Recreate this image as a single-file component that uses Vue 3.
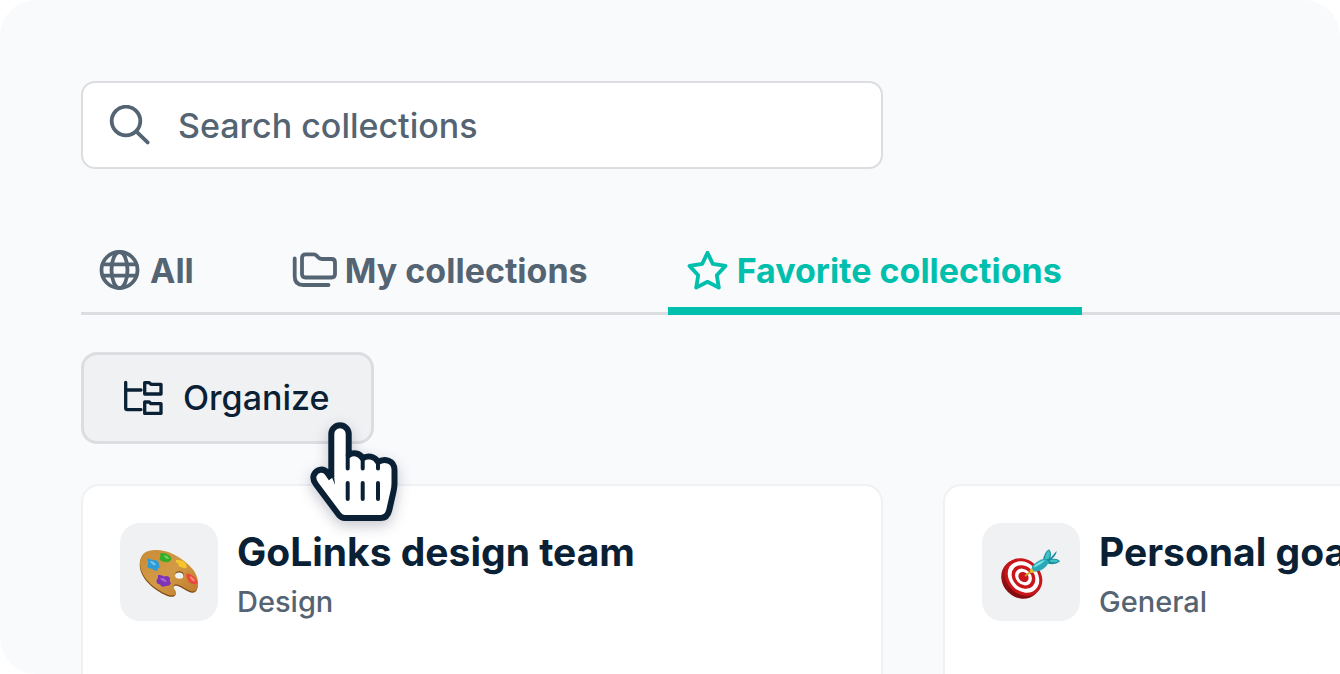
<template>
  <main class="page">
    <label class="search">
      <svg class="search-icon" viewBox="0 0 42 40" aria-hidden="true">
        <circle cx="17" cy="16" r="14.3" />
        <path d="M27.2 26.3 L38.6 37.4" />
      </svg>
      <input v-model="query" type="text" placeholder="Search collections" aria-label="Search collections" />
    </label>

    <nav class="tabs">
      <button
        v-for="tab in tabs"
        :key="tab.id"
        type="button"
        class="tab"
        :class="{ active: tab.id === activeTab }"
        @click="activeTab = tab.id"
      >
        <svg v-if="tab.id === 'all'" class="tab-icon" viewBox="0 0 40 40" aria-hidden="true">
          <circle cx="19.5" cy="19" r="18" />
          <ellipse cx="19.5" cy="19" rx="8" ry="18" />
          <path d="M2.5 13.4 H36.5 M2.5 24.6 H36.5" />
        </svg>
        <svg v-else-if="tab.id === 'mine'" class="tab-icon wide" viewBox="0 0 42 40" aria-hidden="true">
          <path d="M12 3.4 H20.5 C22 3.4 23 3.9 24 5 L25 6.2 C26 7.5 27.2 8 29 8 H38.5 Q42 8 42 11.5 V23 Q42 26.5 38.5 26.5 H12.5 Q9 26.5 9 23 V6.9 Q9 3.4 12.5 3.4 Z" />
          <path d="M1.7 7.5 V25.5 Q1.7 34 10.2 34 H35.5" />
        </svg>
        <svg v-else class="tab-icon" viewBox="0 0 40 40" aria-hidden="true">
          <path d="M20.5 1.8 L25.8 12.9 L38.5 14.9 L29.8 24.3 L31.8 36.6 L20.5 30.8 L9.2 36.6 L11.2 24.3 L2.5 14.9 L15.2 12.9 Z" />
        </svg>
        <span>{{ tab.label }}</span>
      </button>
    </nav>

    <div class="toolbar">
      <button type="button" class="organize">
        <svg class="organize-icon" viewBox="0 0 40 36" aria-hidden="true">
          <path d="M2.7 2.3 V28 Q2.7 29.6 4.3 29.6 H18 M2.7 10 H18" />
          <path d="M21.7 2.6 H26.2 L28 4.3 H38 V14 H21.7 Z" />
          <path d="M21.7 22 H26.2 L28 23.7 H38 V33.4 H21.7 Z" />
        </svg>
        <span>Organize</span>
      </button>

      <!-- hand cursor -->
      <svg class="cursor" viewBox="0 0 88 101" aria-hidden="true">
        <path
          class="hand"
          d="M21.3 56 V13 A8.7 8.7 0 0 1 38.7 13 V34 C43 30.8 50 32 52.7 37.3 C57 34 65 35 68 41 C74 37 84.5 39 84.5 49 V62 Q84.5 66 83.6 70 L79.3 89 Q77.5 97 70.5 97 H35 Q31 97 28.5 93.5 L6 63.5 C3.4 60 2.8 56.8 3.8 54 C6.5 47.5 14 47 17.5 52 L21.3 57.5"
        />
        <path class="thumb" d="M19.5 50 L25 64 L23.5 50 Z" />
        <path class="joint" d="M37.7 34 V47.5 M52.7 37.3 V47.5 M68 41 V47.5" />
        <path class="joint" d="M37.7 62 V78 M52.7 62 V78 M68 62 V78" />
      </svg>
    </div>

    <section class="cards">
      <article v-for="card in cards" :key="card.title" class="card">
        <div class="card-icon">
          <svg v-if="card.icon === 'palette'" viewBox="0 0 60 50" aria-hidden="true">
            <defs>
              <linearGradient id="wood" x1="0" y1="0" x2="1" y2="1">
                <stop offset="0" stop-color="#c98b35" />
                <stop offset="0.5" stop-color="#d39a45" />
                <stop offset="1" stop-color="#bd7a2b" />
              </linearGradient>
            </defs>
            <path
              fill="#7d4a17"
              fill-rule="evenodd"
              transform="translate(-0.3 1.3)"
              :d="palettePath"
            />
            <path fill="url(#wood)" fill-rule="evenodd" :d="palettePath" />
            <path fill="#2f9bd6" d="M8 9.5 Q11 9 13 11 Q17 10 20 13.5 Q19 15 21 18 Q18 19.5 18 22 Q14 21 12.5 19.5 Q8 20 8.5 16.5 Q10 14 8 9.5 Z" />
            <path fill="#72c5ee" d="M11 12 Q15 12 17 16 Q13 17 11 12 Z" />
            <path fill="#35ad29" d="M21 4.5 Q26 3 29.5 6 Q33 8 32 11 Q30 13.8 26.5 13 Q22 12.5 20.5 10 Q22 7 21 4.5 Z" />
            <path fill="#74d45c" d="M25 6 Q30 7 30 10 Q26 10.5 25 6 Z" />
            <path fill="#f5c62d" d="M37 11 Q42 10.5 45 12.5 Q48 15 47.5 19 Q44 19.5 42 18 Q39 17.5 39.5 15 Q36 13 37 11 Z" />
            <path fill="#e9483b" d="M47.5 24.5 Q51 24 54 27 Q58 30 58.5 34.5 Q54 36.5 50.5 33.5 Q46.5 29 47.5 24.5 Z" />
            <path fill="#ff9384" d="M51 27 Q55 29 56 32.5 Q52 32 51 27 Z" />
            <path fill="#7d33b4" d="M19 26 Q23 25.5 25 27.5 Q29 26 31 29 Q30 32 32 34.5 Q30 37.5 26.5 37 Q23 39 21 35.5 Q17 35 17.5 31.5 Q19.5 29 19 26 Z" />
            <path fill="#a865d6" d="M21 29 Q26 28.5 28 33 Q23 33 21 29 Z" />
          </svg>
          <svg v-else viewBox="0 0 60 50" aria-hidden="true">
            <defs>
              <linearGradient id="rim" x1="0" y1="0" x2="0.6" y2="1">
                <stop offset="0" stop-color="#d8201f" />
                <stop offset="1" stop-color="#7e0b0e" />
              </linearGradient>
            </defs>
            <g transform="rotate(45 20 30)">
              <ellipse cx="20" cy="30" rx="21" ry="18.5" fill="url(#rim)" />
            </g>
            <g transform="rotate(45 22.5 28)">
              <ellipse cx="22.5" cy="28" rx="20.5" ry="17" fill="#c8161b" />
              <ellipse cx="22.5" cy="28" rx="17.3" ry="14" fill="#fff" />
              <ellipse cx="22.5" cy="28" rx="13" ry="10.6" fill="#c8161b" />
              <ellipse cx="22.5" cy="28" rx="9.2" ry="7.5" fill="#fff" />
              <ellipse cx="22.5" cy="28" rx="5.5" ry="4.7" fill="#c8161b" />
            </g>
            <path stroke="#d29b13" stroke-width="1.6" d="M24 27 L31 21.8" />
            <path fill="#e9bd1b" d="M28.5 21.5 L31 18.5 L34.5 22 L30.5 24.3 Z" />
            <path fill="#168f9b" d="M42 11.5 Q43 3 48 0.2 Q51 3 49.5 9 L55.5 2 Q56 5 51 10 Q57 9 59 12.5 Q54 16.5 46.5 14.5 Z" />
            <path fill="#43bfc8" d="M44 10 Q44 4 48 1 Q50 5 47.5 10 Z M49 11 Q55 9.5 58 12.3 Q53 14.3 49 12.5 Z" />
            <path fill="#27a9b7" d="M31 17.5 Q36 11 44.5 9.5 L48 13 Q44 21.5 34 22.8 Q30.5 21 31 17.5 Z" />
            <path fill="#79e0e5" d="M33 17 Q38 12 44.5 11 Q40 16 33.5 18.5 Z" />
          </svg>
        </div>
        <div class="card-text">
          <h2>{{ card.title }}</h2>
          <p>{{ card.category }}</p>
        </div>
      </article>
    </section>
  </main>
</template>

<script setup>
import { ref } from 'vue'

const query = ref('')
const activeTab = ref('favorite')

const tabs = [
  { id: 'all', label: 'All' },
  { id: 'mine', label: 'My collections' },
  { id: 'favorite', label: 'Favorite collections' }
]

const cards = [
  { title: 'GoLinks design team', category: 'Design', icon: 'palette' },
  { title: 'Personal goals', category: 'General', icon: 'target' }
]

// board outline plus the thumb hole
const palettePath =
  'M1 14 C1.5 4 8 1 16 1 C24 1 29 2.5 35 5.5 C43 9.5 49 14.5 54 20.5 C58 25.5 60 33 58.5 38.5 ' +
  'C57.5 42.5 54 43.5 50 41.5 C46.5 39.5 44 38.5 42 37 C39 35.3 35 34.5 34.5 37.5 C34.3 40 37.5 41.5 37 44 ' +
  'C36 47.5 31.5 47 27 45 C18 41 10 34.5 5.5 28 C2.5 23.5 1 19 1 14 Z ' +
  'M36 26 a4.4 3.8 0 1 0 8.8 0 a4.4 3.8 0 1 0 -8.8 0 Z'
</script>

<style>
body {
  margin: 0;
  background: #fff;
}
</style>

<style scoped>
.page {
  --column: calc(60vw - 2px);
  --ink: #0a2135;
  --muted: #546472;
  --teal: #00bfad;
  --line: #dcdde0;
  box-sizing: border-box;
  display: flex;
  flex-direction: column;
  min-height: 100vh;
  padding: 81px 0 0 81px;
  overflow: hidden;
  background: #f9fafc;
  border-radius: 36px;
  font-family: Inter, "Liberation Sans", sans-serif;
  font-weight: 500;
  color: var(--ink);
}

button,
input {
  font: inherit;
  color: inherit;
}

svg {
  display: block;
  flex: none;
}

/* search */
.search {
  box-sizing: border-box;
  display: flex;
  align-items: center;
  gap: 27px;
  width: var(--column);
  height: 88px;
  padding: 0 26px;
  background: #fff;
  border: 2px solid var(--line);
  border-radius: 14px;
}

.search-icon {
  width: 42px;
  height: 40px;
  fill: none;
  stroke: var(--muted);
  stroke-width: 3.8;
  stroke-linecap: round;
}

.search input {
  flex: 1;
  min-width: 0;
  padding: 2px 0 0;
  border: 0;
  outline: 0;
  background: none;
  font-size: 34px;
  line-height: 44px;
}

.search input::placeholder {
  color: var(--muted);
  opacity: 1;
}

/* tabs */
.tabs {
  display: flex;
  gap: 60px;
  margin-top: 60px;
  border-bottom: 3px solid var(--line);
}

.tab {
  display: flex;
  align-items: center;
  gap: 10px;
  margin-bottom: -3px;
  padding: 20px 20px 14px 19px;
  border: 0;
  border-bottom: 8px solid transparent;
  background: none;
  color: var(--muted);
  font-size: 34px;
  font-weight: 700;
  line-height: 44px;
  white-space: nowrap;
  cursor: pointer;
}

.tab.active {
  color: var(--teal);
  border-bottom-color: var(--teal);
}

.tab-icon {
  width: 40px;
  height: 40px;
  overflow: visible;
  fill: none;
  stroke: currentColor;
  stroke-width: 3.8;
  stroke-linecap: round;
  stroke-linejoin: round;
}

.tab-icon.wide {
  width: 42px;
}

/* organize */
.toolbar {
  position: relative;
  align-self: flex-start;
  margin-top: 37px;
}

.organize {
  display: flex;
  align-items: center;
  gap: 20px;
  height: 92px;
  padding: 0 42px 0 39px;
  background: #f0f1f3;
  border: 3px solid var(--line);
  border-radius: 16px;
  font-size: 34px;
  line-height: 44px;
  cursor: pointer;
}

.organize-icon {
  width: 40px;
  height: 36px;
  fill: none;
  stroke: currentColor;
  stroke-width: 3.3;
  stroke-linecap: round;
  stroke-linejoin: round;
}

.cursor {
  position: absolute;
  right: -24px;
  bottom: -78px;
  z-index: 2;
  width: 88px;
  height: 101px;
  overflow: visible;
  filter: drop-shadow(0 5px 7px rgba(20, 25, 60, 0.24));
  pointer-events: none;
}

.hand {
  fill: #fff;
  stroke: var(--ink);
  stroke-width: 6;
  stroke-linejoin: round;
}

.thumb {
  fill: var(--ink);
}

.joint {
  fill: none;
  stroke: var(--ink);
  stroke-width: 4;
  stroke-linecap: round;
}

/* cards */
.cards {
  display: flex;
  flex: 1;
  gap: 60px;
  margin-top: 40px;
}

.card {
  box-sizing: border-box;
  display: flex;
  flex: 0 0 var(--column);
  align-items: flex-start;
  gap: 19px;
  min-height: 190px;
  padding: 37px;
  background: #fff;
  border: 2px solid #f0f1f3;
  border-bottom: 0;
  border-radius: 18px 18px 0 0;
}

.card-icon {
  box-sizing: border-box;
  display: flex;
  flex: none;
  align-items: center;
  justify-content: center;
  width: 98px;
  height: 98px;
  padding-top: 4px;
  background: #f0f1f3;
  border-radius: 20px;
}

.card-icon svg {
  width: 60px;
  height: 50px;
}

.card-text {
  white-space: nowrap;
}

h2 {
  margin: 3px 0 0;
  font-size: 39px;
  font-weight: 700;
  line-height: 52px;
}

p {
  margin: 5px 0 0;
  color: var(--muted);
  font-size: 29px;
  line-height: 38px;
}
</style>
